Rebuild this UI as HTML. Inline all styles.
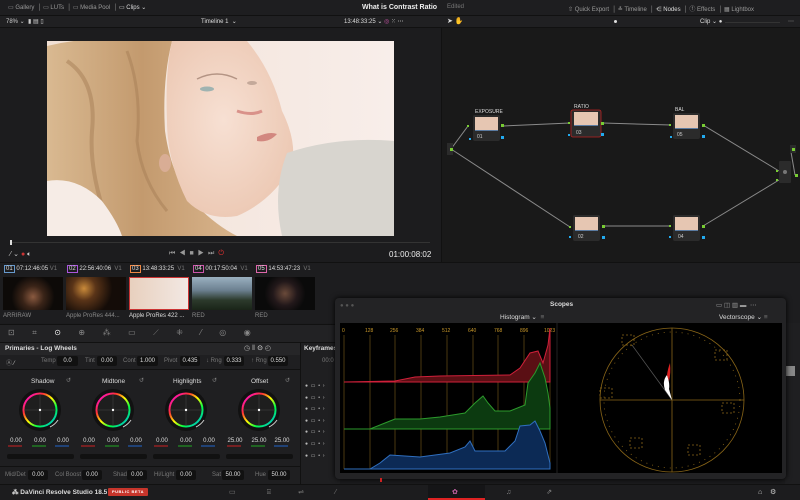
<!DOCTYPE html>
<html><head><meta charset="utf-8"><style>
*{margin:0;padding:0;box-sizing:border-box}
body{width:800px;height:500px;background:#1c1c1e;font-family:"Liberation Sans",sans-serif;color:#bbb;font-size:6px;position:relative;overflow:hidden}
.a{position:absolute}
.t{position:absolute;white-space:nowrap}
.num{position:absolute;background:#111;border-radius:2px;color:#ddd;text-align:center;font-size:6px;line-height:10px;height:10px}
.wv{position:absolute;color:#ddd;font-size:6px;width:20px;text-align:center;top:438px}
</style></head><body>
<div class="a" style="left:0;top:0;width:800px;height:16px;background:#1e1e20;border-bottom:1px solid #111"></div>
<div class="t" style="left:8px;top:4px;font-size:6px;color:#999">▭ Gallery &nbsp;│ ▭ LUTs &nbsp;│ ▭ Media Pool &nbsp;│ <span style="color:#ddd">▭ Clips ⌄</span></div>
<div class="t" style="left:362px;top:4px;font-size:7px;color:#eee;font-weight:bold">What is Contrast Ratio</div>
<div class="t" style="left:447px;top:4px;font-size:6px;color:#777">Edited</div>
<div class="t" style="left:568px;top:4px;font-size:6px;color:#999">⇧ Quick Export &nbsp;│ ≛ Timeline &nbsp;│ <span style="color:#ddd">⋲ Nodes</span> &nbsp;│ ⓕ Effects &nbsp;│ ▦ Lightbox</div>
<div class="a" style="left:0;top:16px;width:800px;height:12px;background:#202022;border-bottom:1px solid #111"></div>
<div class="t" style="left:6px;top:18px;color:#ccc">78% ⌄ &nbsp;▮ ▤ ▯</div>
<div class="t" style="left:201px;top:18px;color:#ddd">Timeline 1 &nbsp;⌄</div>
<div class="t" style="left:344px;top:18px;color:#ddd">13:48:33:25 ⌄ <span style="color:#c5a">◎</span> ⁙ ⋯</div>
<div class="t" style="left:447px;top:17px;color:#ddd;font-size:7px">➤ ✋</div>
<div class="a" style="left:614px;top:20px;width:3px;height:3px;border-radius:2px;background:#ddd"></div>
<div class="t" style="left:700px;top:18px;color:#ddd">Clip ⌄ ●</div>
<div class="a" style="left:725px;top:22px;width:55px;height:1px;background:#333"></div>
<div class="t" style="left:788px;top:18px;color:#999">⋯</div>
<div class="a" style="left:0;top:28px;width:441px;height:234px;background:#1c1c1e"></div>
<svg class="a" style="left:47px;top:41px" width="347" height="195" viewBox="0 0 347 195">
<defs><linearGradient id="bg" x1="0" y1="0" x2="1" y2="0"><stop offset="0" stop-color="#f1e0d4"/><stop offset="1" stop-color="#f8eeea"/></linearGradient>
<radialGradient id="face" cx="0.45" cy="0.45" r="0.6"><stop offset="0" stop-color="#f7e0d3"/><stop offset="1" stop-color="#ecc8b3"/></radialGradient>
<linearGradient id="hair" x1="0" y1="0" x2="1" y2="0"><stop offset="0" stop-color="#d9b991"/><stop offset="0.5" stop-color="#c39a6e"/><stop offset="1" stop-color="#d8b48c"/></linearGradient></defs>
<rect width="347" height="195" fill="url(#bg)"/>
<path d="M0 5 Q40 -5 80 0 H125 Q115 40 118 90 Q125 140 150 165 Q170 185 190 195 H20 Q10 170 0 160Z" fill="url(#hair)"/>
<path d="M20 20 Q50 40 45 90 Q42 130 60 180" stroke="#a57d55" stroke-width="4" fill="none" opacity="0.5"/>
<path d="M80 10 Q95 50 90 100 Q95 140 120 170" stroke="#a57d55" stroke-width="3" fill="none" opacity="0.5"/>
<path d="M0 140 Q30 135 55 160 Q70 180 75 195 H0Z" fill="#f6ece6"/>
<path d="M125 0 H200 Q225 30 235 70 Q250 100 245 125 Q225 160 190 175 Q160 180 140 160 Q120 120 120 80 Q118 30 125 0Z" fill="url(#face)"/>
<path d="M240 112 Q290 95 347 100 V195 H235 Q225 150 240 112Z" fill="#d8d5cf"/>
<path d="M150 38 Q170 28 190 38" stroke="#b49484" stroke-width="1.5" fill="none"/>
<ellipse cx="160" cy="48" rx="7" ry="2.5" fill="#9fb3b1"/>
<ellipse cx="205" cy="42" rx="5" ry="2" fill="#c4a99a"/>
<path d="M190 70 Q205 75 215 70" stroke="#d9928a" stroke-width="3" fill="none"/>
<path d="M210 96 Q222 90 230 93 Q222 102 210 100Z" fill="#d2877f"/>
<ellipse cx="118" cy="122" rx="6" ry="9" fill="#d9ad95"/>
</svg>
<div class="a" style="left:10px;top:242px;width:420px;height:1px;background:#333"></div>
<div class="a" style="left:10px;top:240px;width:2px;height:5px;background:#ddd"></div>
<div class="t" style="left:10px;top:250px;color:#ccc;font-size:7px">⁄ ⌄ <span style="color:#c33">●</span> 🔈︎</div>
<div class="t" style="left:169px;top:250px;color:#999;font-size:7px;letter-spacing:4px">⏮◀■▶⏭<span style="color:#e33">⏻</span></div>
<div class="t" style="left:389px;top:250px;color:#eee;font-size:8px">01:00:08:02</div>
<div class="a" style="left:441px;top:28px;width:359px;height:234px;background:#191919;border-left:1px solid #111"></div>
<svg class="a" style="left:441px;top:28px" width="359" height="234">
<g stroke="#8a8a8a" stroke-width="1" fill="none">
<line x1="10" y1="121" x2="27" y2="98"/><line x1="10" y1="121" x2="129" y2="199"/>
<line x1="62" y1="98" x2="129" y2="95"/><line x1="162" y1="95" x2="230" y2="97"/>
<line x1="162" y1="198" x2="230" y2="198"/><line x1="262" y1="97" x2="338" y2="143"/>
<line x1="262" y1="198" x2="338" y2="152"/><line x1="354" y1="147" x2="350" y2="124"/>
</g>
<g font-family="Liberation Sans" font-size="5" fill="#ddd">
<text x="34" y="85">EXPOSURE</text><text x="133" y="80">RATIO</text><text x="234" y="83">BAL</text>
</g>
<g>
<rect x="32" y="87" width="27" height="26" rx="2" fill="#2b2b2b"/><rect x="34" y="89" width="23" height="13" fill="#e6c6b2"/><rect x="34" y="102" width="23" height="1" fill="#5a7aa0"/>
<rect x="130" y="82" width="30" height="27" rx="2" fill="#2b2b2b" stroke="#b22" stroke-width="0.8"/><rect x="133" y="84" width="24" height="13" fill="#e6c6b2"/><rect x="133" y="97" width="24" height="1" fill="#5a7aa0"/>
<rect x="232" y="85" width="27" height="26" rx="2" fill="#2b2b2b"/><rect x="234" y="87" width="23" height="13" fill="#e6c6b2"/><rect x="234" y="100" width="23" height="1" fill="#5a7aa0"/>
<rect x="132" y="187" width="27" height="26" rx="2" fill="#2b2b2b"/><rect x="134" y="189" width="23" height="13" fill="#e6c6b2"/><rect x="134" y="202" width="23" height="1" fill="#5a7aa0"/>
<rect x="232" y="187" width="27" height="26" rx="2" fill="#2b2b2b"/><rect x="234" y="189" width="23" height="13" fill="#e6c6b2"/><rect x="234" y="202" width="23" height="1" fill="#5a7aa0"/>
<rect x="338" y="133" width="12" height="22" rx="1" fill="#2b2b2b"/><circle cx="344" cy="144" r="2" fill="#777"/>
<rect x="6" y="115" width="6" height="12" fill="#2b2b2b"/><rect x="349" y="117" width="6" height="8" fill="#2b2b2b"/>
</g>
<g font-family="Liberation Sans" font-size="5" fill="#ccc"><text x="36" y="110">01</text><text x="135" y="106">03</text><text x="236" y="108">05</text><text x="137" y="210">02</text><text x="237" y="210">04</text></g>
<g fill="#7c3"><rect x="60" y="96" width="3" height="3"/><rect x="127" y="94" width="2" height="2"/><rect x="160" y="94" width="3" height="3"/><rect x="228" y="96" width="2" height="2"/><rect x="261" y="96" width="3" height="3"/><rect x="26" y="97" width="2" height="2"/><rect x="128" y="198" width="2" height="2"/><rect x="161" y="197" width="3" height="3"/><rect x="228" y="197" width="2" height="2"/><rect x="261" y="197" width="3" height="3"/><rect x="335" y="142" width="2" height="2"/><rect x="335" y="151" width="2" height="2"/><rect x="354" y="146" width="3" height="3"/><rect x="9" y="120" width="3" height="3"/><rect x="351" y="120" width="3" height="3"/></g>
<g fill="#2ae"><rect x="60" y="108" width="3" height="3"/><rect x="160" y="105" width="3" height="3"/><rect x="261" y="107" width="3" height="3"/><rect x="161" y="208" width="3" height="3"/><rect x="261" y="208" width="3" height="3"/><rect x="28" y="110" width="2" height="2"/><rect x="127" y="106" width="2" height="2"/><rect x="229" y="108" width="2" height="2"/><rect x="128" y="208" width="2" height="2"/><rect x="228" y="208" width="2" height="2"/></g>
</svg>
<div class="a" style="left:0;top:262px;width:800px;height:61px;background:#1d1d1f;border-top:1px solid #111"></div>
<div class="t" style="left:4px;top:266px;color:#ddd;font-size:6px"><span style="border:1px solid #69c;padding:0 1px">01</span> 07:12:46:05 <span style="color:#777">V1</span></div>
<div class="t" style="left:67px;top:266px;color:#ddd"><span style="border:1px solid #a5d;padding:0 1px">02</span> 22:56:40:06 <span style="color:#777">&nbsp;V1</span></div>
<div class="t" style="left:130px;top:266px;color:#ddd"><span style="border:1px solid #e84;padding:0 1px">03</span> 13:48:33:25 <span style="color:#777">&nbsp;V1</span></div>
<div class="t" style="left:193px;top:266px;color:#ddd"><span style="border:1px solid #c5a;padding:0 1px">04</span> 00:17:50:04 <span style="color:#777">&nbsp;V1</span></div>
<div class="t" style="left:256px;top:266px;color:#ddd"><span style="border:1px solid #d6a;padding:0 1px">05</span> 14:53:47:23 <span style="color:#777">&nbsp;V1</span></div>
<div class="a" style="left:3px;top:277px;width:60px;height:33px;background:radial-gradient(circle at 50% 60%,#8a5a40 0,#3a2418 30%,#0d0a08 60%)"></div>
<div class="a" style="left:66px;top:277px;width:60px;height:33px;background:radial-gradient(circle at 30% 35%,#c98a3a 0,#5a3418 25%,#140c08 60%)"></div>
<div class="a" style="left:129px;top:277px;width:60px;height:33px;background:linear-gradient(90deg,#e8d0be,#f2e8e3);border:1px solid #c33"></div>
<div class="a" style="left:192px;top:277px;width:60px;height:33px;background:linear-gradient(180deg,#9ab0c0 0,#6c8090 40%,#2c3a2c 70%,#1a2418 100%)"></div>
<div class="a" style="left:255px;top:277px;width:60px;height:33px;background:radial-gradient(circle at 50% 50%,#6a4a3a 0,#22181a 35%,#0a0a0a 60%)"></div>
<div class="t" style="left:3px;top:313px;color:#888">ARRIRAW</div>
<div class="t" style="left:66px;top:313px;color:#888">Apple ProRes 444...</div>
<div class="t" style="left:129px;top:313px;color:#ddd">Apple ProRes 422 ...</div>
<div class="t" style="left:192px;top:313px;color:#888">RED</div>
<div class="t" style="left:255px;top:313px;color:#888">RED</div>
<div class="a" style="left:0;top:324px;width:340px;height:19px;background:#222224;border-top:1px solid #111;border-bottom:1px solid #111"></div>
<div class="t" style="left:8px;top:328px;color:#888;font-size:8px;letter-spacing:17.5px">⊡⌗<span style="color:#eee">⊙</span>⊕⁂▭⟋⁜⁄◎◉</div>
<div class="a" style="left:0;top:343px;width:300px;height:144px;background:#1f1f21"></div>
<div class="a" style="left:0;top:343px;width:300px;height:12px;background:#262628"></div>
<div class="t" style="left:5px;top:345px;color:#ddd;font-size:6.5px;font-weight:bold">Primaries - Log Wheels</div>
<div class="t" style="left:244px;top:344px;color:#aaa;font-size:7px">◷ ⦀ <span style="color:#eee">⊙</span> ◴</div>
<div class="t" style="left:6px;top:358px;color:#888">Ⓐ <span style="color:#ccc">⁄</span></div>
<div class="t" style="left:41px;top:358px;color:#777">Temp</div><div class="num" style="left:57px;top:356px;width:21px">0.0</div>
<div class="t" style="left:85px;top:358px;color:#777">Tint</div><div class="num" style="left:97px;top:356px;width:20px">0.00</div>
<div class="t" style="left:123px;top:358px;color:#777">Cont</div><div class="num" style="left:137px;top:356px;width:21px">1.000</div>
<div class="t" style="left:164px;top:358px;color:#777">Pivot</div><div class="num" style="left:180px;top:356px;width:20px">0.435</div>
<div class="t" style="left:206px;top:358px;color:#777">↓ Rng</div><div class="num" style="left:224px;top:356px;width:20px">0.333</div>
<div class="t" style="left:251px;top:358px;color:#777">↑ Rng</div><div class="num" style="left:268px;top:356px;width:20px">0.550</div>
<div class="a" style="left:0;top:369px;width:300px;height:1px;background:#111"></div>
<div class="t" style="left:31px;top:378px;color:#ddd;font-size:6.5px">Shadow</div>
<div class="t" style="left:102px;top:378px;color:#ddd;font-size:6.5px">Midtone</div>
<div class="t" style="left:173px;top:378px;color:#ddd;font-size:6.5px">Highlights</div>
<div class="t" style="left:251px;top:378px;color:#ddd;font-size:6.5px">Offset</div>
<div class="t" style="left:66px;top:377px;color:#888">↺</div><div class="t" style="left:139px;top:377px;color:#888">↺</div><div class="t" style="left:212px;top:377px;color:#888">↺</div><div class="t" style="left:285px;top:377px;color:#888">↺</div>
<svg class="a" style="left:0;top:385px" width="300" height="50">
<defs><linearGradient id="rw" x1="0" y1="0" x2="1" y2="1"><stop offset="0" stop-color="#f0f"/><stop offset="0.3" stop-color="#f33"/><stop offset="0.5" stop-color="#ff0"/><stop offset="0.7" stop-color="#0f4"/><stop offset="1" stop-color="#0af"/></linearGradient></defs>
<g id="w"><circle cx="40" cy="25" r="21" fill="#111"/><circle cx="40" cy="25" r="16.5" fill="#1e1e1e" stroke="url(#rw)" stroke-width="2"/><line x1="24" y1="25" x2="56" y2="25" stroke="#444" stroke-width="0.5"/><line x1="40" y1="9" x2="40" y2="41" stroke="#444" stroke-width="0.5"/><circle cx="40" cy="25" r="1.2" fill="#fff"/><path d="M50 42 A20 20 0 0 0 58 35" stroke="#ccc" stroke-width="1" fill="none"/></g>
<use href="#w" x="73"/><use href="#w" x="146"/><use href="#w" x="219"/>
</svg>
<div class="wv" style="left:6px">0.00</div><div class="wv" style="left:30px">0.00</div><div class="wv" style="left:53px">0.00</div>
<div class="wv" style="left:79px">0.00</div><div class="wv" style="left:103px">0.00</div><div class="wv" style="left:126px">0.00</div>
<div class="wv" style="left:152px">0.00</div><div class="wv" style="left:176px">0.00</div><div class="wv" style="left:199px">0.00</div>
<div class="wv" style="left:225px">25.00</div><div class="wv" style="left:249px">25.00</div><div class="wv" style="left:272px">25.00</div>
<svg class="a" style="left:0;top:445px" width="300" height="20">
<g stroke-width="1"><g id="u"><line x1="8" y1="1" x2="22" y2="1" stroke="#c22"/><line x1="32" y1="1" x2="46" y2="1" stroke="#2a2"/><line x1="55" y1="1" x2="69" y2="1" stroke="#26c"/></g>
<use href="#u" x="73"/><use href="#u" x="146"/><use href="#u" x="219"/></g>
<rect x="7" y="9" width="67" height="5" rx="2" fill="#111"/><rect x="80" y="9" width="67" height="5" rx="2" fill="#111"/><rect x="153" y="9" width="67" height="5" rx="2" fill="#111"/><rect x="226" y="9" width="67" height="5" rx="2" fill="#111"/>
</svg>
<div class="a" style="left:0;top:466px;width:300px;height:1px;background:#111"></div>
<div class="t" style="left:5px;top:472px;color:#777">Mid/Det</div><div class="num" style="left:28px;top:470px;width:20px">0.00</div>
<div class="t" style="left:55px;top:472px;color:#777">Col Boost</div><div class="num" style="left:82px;top:470px;width:20px">0.00</div>
<div class="t" style="left:113px;top:472px;color:#777">Shad</div><div class="num" style="left:127px;top:470px;width:20px">0.00</div>
<div class="t" style="left:154px;top:472px;color:#777">Hi/Light</div><div class="num" style="left:176px;top:470px;width:20px">0.00</div>
<div class="t" style="left:212px;top:472px;color:#777">Sat</div><div class="num" style="left:222px;top:470px;width:22px">50.00</div>
<div class="t" style="left:255px;top:472px;color:#777">Hue</div><div class="num" style="left:268px;top:470px;width:22px">50.00</div>
<div class="a" style="left:300px;top:343px;width:40px;height:144px;background:#1f1f21;border-left:1px solid #111"></div>
<div class="t" style="left:304px;top:345px;color:#ddd;font-size:6.5px;font-weight:bold">Keyframes</div>
<div class="t" style="left:322px;top:358px;color:#777">00:0</div>
<div class="t" style="left:305px;top:381px;color:#bbb;line-height:11.6px;font-size:5px;white-space:pre">●  ▭  •  ›
●  ▭  •  ›
●  ▭  •  ›
●  ▭  •  ›
●  ▭  •  ›
●  ▭  •  ›
●  ▭  •  ›</div>
<div class="a" style="left:785px;top:323px;width:15px;height:164px;background:#1f1f21"></div>
<div class="a" style="left:786px;top:366px;width:9px;height:10px;background:#888"></div>
<div class="a" style="left:335px;top:298px;width:451px;height:181px;background:#232325;border-radius:4px;box-shadow:0 0 6px #000"></div>
<div class="t" style="left:340px;top:303px;color:#555;font-size:6px">● ● ●</div>
<div class="t" style="left:550px;top:301px;color:#ddd;font-size:6.5px;font-weight:bold">Scopes</div>
<div class="t" style="left:716px;top:301px;color:#999;font-size:6.5px">▭ ◫ ▥ ▬ &nbsp;⋯</div>
<div class="t" style="left:500px;top:313px;color:#ddd;font-size:6.5px">Histogram ⌄ &nbsp;<span style="color:#777">≡</span></div>
<div class="t" style="left:719px;top:313px;color:#ddd;font-size:6.5px">Vectorscope ⌄ <span style="color:#777">≡</span></div>
<svg class="a" style="left:340px;top:323px" width="442" height="150">
<rect width="442" height="150" fill="#000"/>
<g font-family="Liberation Sans" font-size="5" fill="#c9982a">
<text x="2" y="9">0</text><text x="25" y="9">128</text><text x="50" y="9">256</text><text x="76" y="9">384</text><text x="102" y="9">512</text><text x="128" y="9">640</text><text x="154" y="9">768</text><text x="180" y="9">896</text><text x="204" y="9">1023</text></g>
<g stroke="#6a5218" stroke-width="0.7"><line x1="4" y1="12" x2="4" y2="146"/><line x1="30" y1="12" x2="30" y2="146"/><line x1="55" y1="12" x2="55" y2="146"/><line x1="81" y1="12" x2="81" y2="146"/><line x1="107" y1="12" x2="107" y2="146"/><line x1="133" y1="12" x2="133" y2="146"/><line x1="158" y1="12" x2="158" y2="146"/><line x1="184" y1="12" x2="184" y2="146"/><line x1="210" y1="12" x2="210" y2="146"/><line x1="4" y1="146" x2="210" y2="146"/></g>
<path d="M4 59 L55 58 L75 54 L100 53 L170 52 L180 45 L190 30 L198 28 L203 40 L208 22 L210 5 L210 59Z" fill="#5a0f14" stroke="#d0203a" stroke-width="1"/>
<path d="M4 106 L30 106 L45 100 L55 96 L80 96 L100 94 L125 90 L135 80 L143 73 L148 80 L155 88 L170 88 L185 82 L188 60 L195 50 L200 40 L205 55 L208 70 L210 85 L210 106Z" fill="#0c3a10" stroke="#2c9a2c" stroke-width="1"/>
<path d="M4 146 L30 146 L40 140 L50 132 L80 134 L110 130 L125 124 L130 118 L135 128 L165 128 L175 118 L180 103 L190 102 L195 98 L200 108 L205 120 L210 140 L210 146Z" fill="#0c2a55" stroke="#2f6fc0" stroke-width="1"/>
<line x1="217" y1="0" x2="217" y2="150" stroke="#222"/>
<g stroke="#8a6618" fill="none" stroke-width="0.8">
<circle cx="332" cy="77" r="72"/><line x1="260" y1="77" x2="404" y2="77"/><line x1="332" y1="5" x2="332" y2="149"/>
<circle cx="332" cy="77" r="68" stroke-dasharray="1 5"/>
<line x1="332" y1="77" x2="292" y2="22" stroke="#555"/>
<rect x="282" y="12" width="12" height="10" stroke-dasharray="2 2"/><rect x="375" y="27" width="12" height="10" stroke-dasharray="2 2"/><rect x="260" y="65" width="12" height="10" stroke-dasharray="2 2"/><rect x="382" y="80" width="12" height="10" stroke-dasharray="2 2"/><rect x="290" y="115" width="12" height="10" stroke-dasharray="2 2"/><rect x="348" y="122" width="12" height="10" stroke-dasharray="2 2"/>
</g>
<path d="M332 77 L325 67 Q322 58 327 52 Q330 60 329 66Z" fill="#fff"/>
<path d="M327 52 Q328 45 330 40 Q331 50 329 58Z" fill="#d22"/>
</svg>
<div class="a" style="left:380px;top:478px;width:2px;height:4px;background:#c22"></div>
<div class="a" style="left:0;top:484px;width:800px;height:16px;background:#1c1c1e;border-top:1px solid #111"></div>
<div class="t" style="left:12px;top:488px;color:#ddd;font-size:6.5px;font-weight:bold">⁂ DaVinci Resolve Studio 18.5</div>
<div class="a" style="left:108px;top:488px;width:40px;height:8px;background:#c7352b;border-radius:1px;color:#fff;font-size:4px;text-align:center;line-height:8px;font-weight:bold;letter-spacing:0.5px">PUBLIC BETA</div>
<div class="t" style="left:229px;top:488px;color:#777;font-size:7px">▭ &nbsp;&nbsp;&nbsp;&nbsp;&nbsp;&nbsp;&nbsp;&nbsp;&nbsp;&nbsp;&nbsp;&nbsp;&nbsp;&nbsp; ⌸ &nbsp;&nbsp;&nbsp;&nbsp;&nbsp;&nbsp;&nbsp;&nbsp;&nbsp;&nbsp;&nbsp;&nbsp; ⇌ &nbsp;&nbsp;&nbsp;&nbsp;&nbsp;&nbsp;&nbsp;&nbsp;&nbsp;&nbsp;&nbsp;&nbsp;&nbsp;&nbsp; ⁄</div>
<div class="a" style="left:428px;top:485px;width:57px;height:15px;background:#151517"></div>
<div class="a" style="left:428px;top:498px;width:57px;height:2px;background:#d22"></div>
<div class="t" style="left:452px;top:488px;color:#c6a;font-size:7px">✿</div>
<div class="t" style="left:506px;top:488px;color:#888;font-size:7px">♫ &nbsp;&nbsp;&nbsp;&nbsp;&nbsp;&nbsp;&nbsp;&nbsp;&nbsp;&nbsp;&nbsp;&nbsp;&nbsp;&nbsp;&nbsp;&nbsp; ⇗</div>
<div class="t" style="left:758px;top:488px;color:#ccc;font-size:7px">⌂ &nbsp;&nbsp;&nbsp;⚙</div>
</body></html>
